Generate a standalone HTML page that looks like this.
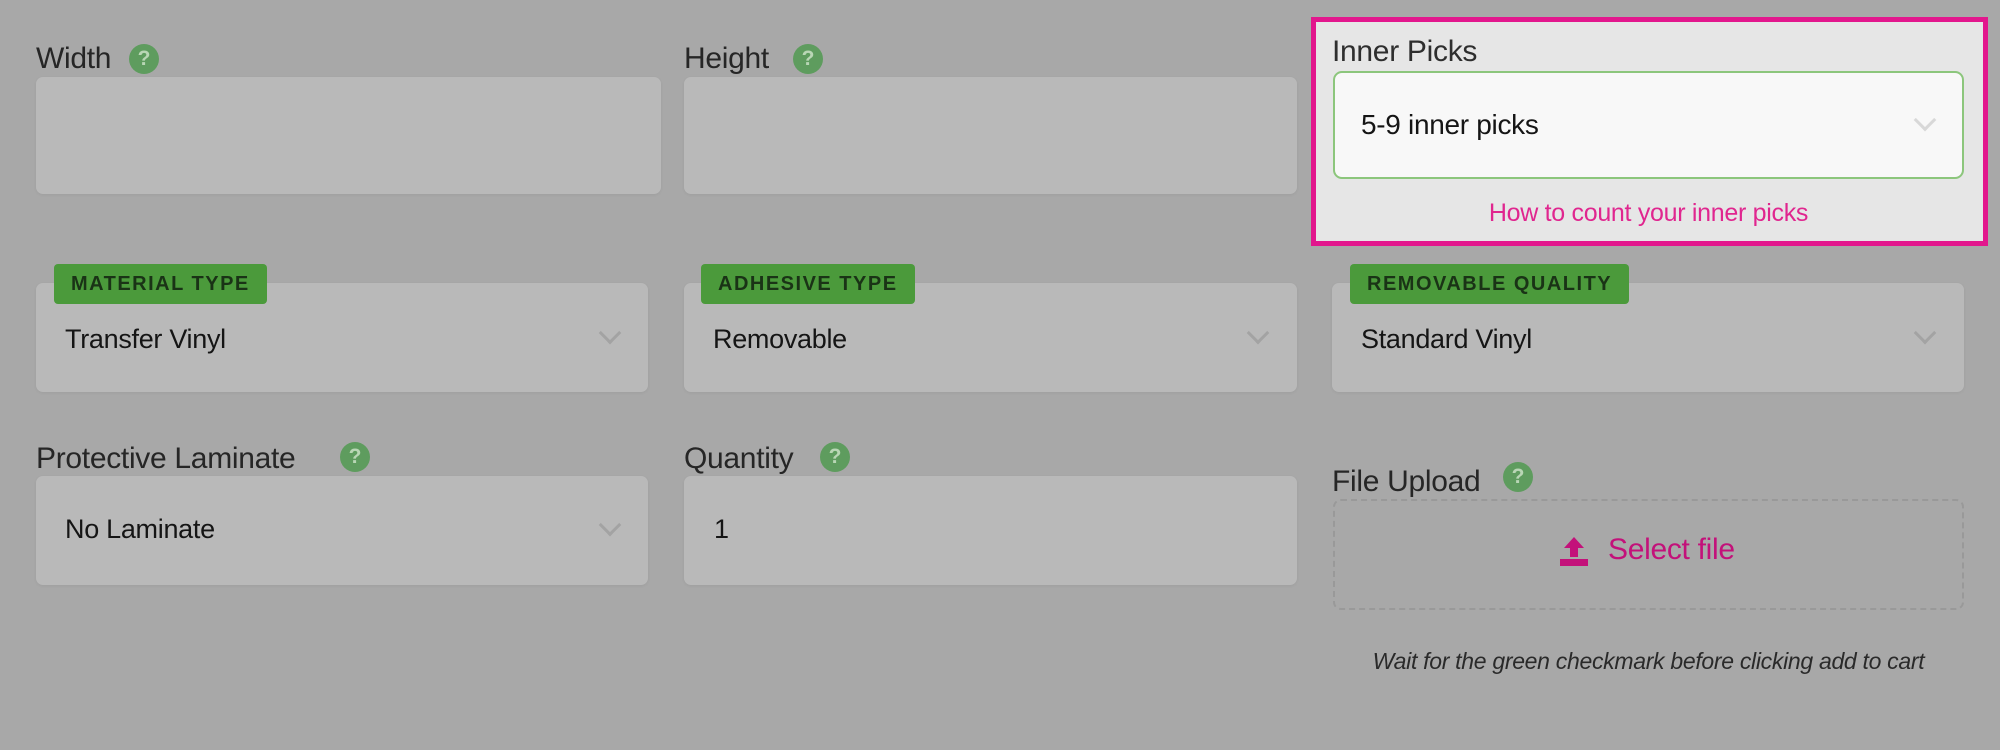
<!DOCTYPE html>
<html><head><meta charset="utf-8"><style>
*{box-sizing:border-box;margin:0;padding:0}
body{width:2000px;height:750px;background:#a8a8a8;font-family:"Liberation Sans",sans-serif;position:relative;overflow:hidden;color:#1c1c1c}
.a{position:absolute}
.lbl{font-size:30px;color:#262626;line-height:32px;letter-spacing:-0.3px}
.q{position:absolute;width:30px;height:30px;border-radius:50%;background:#5e9c5e;color:#b9d6b5;font-weight:bold;font-size:21px;text-align:center;line-height:30px}
.box{position:absolute;background:#b9b9b9;border-radius:7px;box-shadow:0 1px 3px rgba(0,0,0,.06)}
.val{position:absolute;font-size:27px;color:#151515;line-height:30px;letter-spacing:-0.3px}
.chev{position:absolute;width:16px;height:16px;border-right:3px solid #a3a3a3;border-bottom:3px solid #a3a3a3;transform:rotate(45deg)}
.badge{position:absolute;height:40px;background:#4b9a3b;border-radius:4px;color:#1a3316;font-weight:bold;font-size:20px;letter-spacing:1.5px;line-height:40px;padding:0 17px}
</style></head><body>
<div class="a lbl" style="left:36px;top:43px">Width</div><div class="q" style="left:129px;top:44px">?</div>
<div class="box" style="left:36px;top:77px;width:625px;height:117px"></div>
<div class="a lbl" style="left:684px;top:43px">Height</div><div class="q" style="left:793px;top:44px">?</div>
<div class="box" style="left:684px;top:77px;width:613px;height:117px"></div>

<div class="a" style="left:1311px;top:17px;width:677px;height:229px;border:5px solid #e2178d;background:#e6e6e6"></div>
<div class="a lbl" style="left:1332px;top:36px;color:#2e2e2e">Inner Picks</div>
<div class="a" style="left:1333px;top:71px;width:631px;height:108px;background:#f8f8f8;border:2.5px solid #8cc67c;border-radius:9px"></div>
<div class="val" style="left:1361px;top:110px;font-size:28px">5-9 inner picks</div>
<div class="chev" style="left:1917px;top:112px;border-color:#d8d8d8"></div>
<div class="a" style="left:1333px;top:199px;width:631px;text-align:center;font-size:25px;color:#e0268f;letter-spacing:-0.3px">How to count your inner picks</div>

<div class="box" style="left:36px;top:283px;width:612px;height:109px"></div>
<div class="badge" style="left:54px;top:264px">MATERIAL TYPE</div>
<div class="val" style="left:65px;top:324px">Transfer Vinyl</div><div class="chev" style="left:602px;top:325px"></div>
<div class="box" style="left:684px;top:283px;width:613px;height:109px"></div>
<div class="badge" style="left:701px;top:264px">ADHESIVE TYPE</div>
<div class="val" style="left:713px;top:324px">Removable</div><div class="chev" style="left:1250px;top:325px"></div>
<div class="box" style="left:1332px;top:283px;width:632px;height:109px"></div>
<div class="badge" style="left:1350px;top:264px">REMOVABLE QUALITY</div>
<div class="val" style="left:1361px;top:324px">Standard Vinyl</div><div class="chev" style="left:1917px;top:325px"></div>

<div class="a lbl" style="left:36px;top:443px">Protective Laminate</div><div class="q" style="left:340px;top:442px">?</div>
<div class="box" style="left:36px;top:476px;width:612px;height:109px"></div>
<div class="val" style="left:65px;top:514px">No Laminate</div><div class="chev" style="left:602px;top:517px"></div>
<div class="a lbl" style="left:684px;top:443px">Quantity</div><div class="q" style="left:820px;top:442px">?</div>
<div class="box" style="left:684px;top:476px;width:613px;height:109px"></div>
<div class="val" style="left:714px;top:514px">1</div>

<div class="a lbl" style="left:1332px;top:466px">File Upload</div><div class="q" style="left:1503px;top:462px">?</div>
<div class="a" style="left:1333px;top:499px;width:631px;height:111px;border:2px dashed #999;border-radius:8px"></div>
<svg class="a" style="left:1560px;top:536px" width="28" height="30" viewBox="0 0 28 30"><path d="M14 1 L24 12 H18 V21 H10 V12 H4 Z" fill="#c3117a"/><rect x="0" y="23" width="28" height="7" fill="#c3117a"/></svg>
<div class="a" style="left:1608px;top:533px;font-size:30px;color:#c3117a;letter-spacing:-0.3px">Select file</div>
<div class="a" style="left:1333px;top:648px;width:631px;text-align:center;font-size:23px;font-style:italic;color:#2a2a2a;letter-spacing:-0.3px">Wait for the green checkmark before clicking add to cart</div>
</body></html>
